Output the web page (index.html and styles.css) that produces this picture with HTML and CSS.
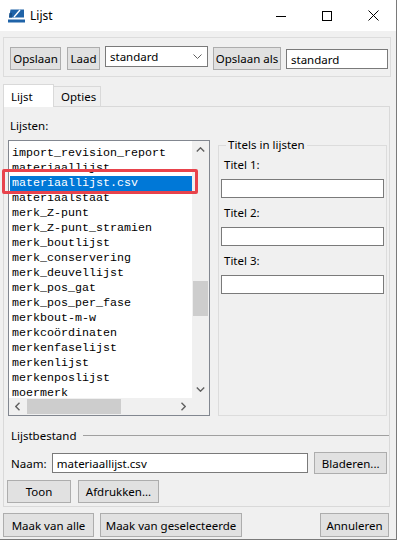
FILE: index.html
```html
<!DOCTYPE html>
<html>
<head>
<meta charset="utf-8">
<title>Lijst</title>
<link rel="stylesheet" href="styles.css">
</head>
<body>
<div class="window">
  <div class="titlebar">
    <svg class="appicon" width="18" height="14" viewBox="0 0 18 14">
      <path d="M2.5 0.5 H16 V8.5 H1 Z" fill="#1f63a8"/>
      <path d="M1.5 4 H4 V8.5 H1 Z" fill="#174f8a"/>
      <path d="M6 8 L12 1" stroke="#ffffff" stroke-width="1.4"/>
      <rect x="0" y="10.5" width="17" height="3" fill="#1f63a8"/>
    </svg>
    <span class="title">Lijst</span>
    <div class="caps">
      <div class="cap"><svg width="10" height="10" viewBox="0 0 10 10"><path d="M0 5.5 H10" stroke="#000" stroke-width="1"/></svg></div>
      <div class="cap"><svg width="10" height="10" viewBox="0 0 10 10"><rect x="0.5" y="0.5" width="9" height="9" fill="none" stroke="#000" stroke-width="1"/></svg></div>
      <div class="cap"><svg width="11" height="11" viewBox="0 0 11 11"><path d="M0.5 0.5 L10.5 10.5 M10.5 0.5 L0.5 10.5" stroke="#000" stroke-width="1"/></svg></div>
    </div>
  </div>

  <div class="client">
    <div class="toolbar">
      <button class="btn w-opslaan">Opslaan</button>
      <button class="btn w-laad">Laad</button>
      <div class="combo">
        <span>standard</span>
        <svg class="chev" width="9" height="5" viewBox="0 0 9 5"><path d="M0.5 0.5 L4.5 4.5 L8.5 0.5" fill="none" stroke="#606060" stroke-width="1"/></svg>
      </div>
      <button class="btn w-opslaanals">Opslaan als</button>
      <div class="textbox tb-standard">standard</div>
    </div>

    <div class="tabs">
      <div class="tab active">Lijst</div>
      <div class="tab">Opties</div>
    </div>

    <div class="tabpage">
      <div class="lbl-lijsten">Lijsten:</div>
      <div class="cols">
        <div class="listbox">
          <div class="list-main">
            <div class="items">
              <div class="item">import_revision_report</div>
              <div class="item">materiaallijst</div>
              <div class="item selected">materiaallijst.csv</div>
              <div class="item">materiaalstaat</div>
              <div class="item">merk_Z-punt</div>
              <div class="item">merk_Z-punt_stramien</div>
              <div class="item">merk_boutlijst</div>
              <div class="item">merk_conservering</div>
              <div class="item">merk_deuvellijst</div>
              <div class="item">merk_pos_gat</div>
              <div class="item">merk_pos_per_fase</div>
              <div class="item">merkbout-m-w</div>
              <div class="item">merkcoördinaten</div>
              <div class="item">merkenfaselijst</div>
              <div class="item">merkenlijst</div>
              <div class="item">merkenposlijst</div>
              <div class="item last">moermerk</div>
            </div>
            <div class="vscroll">
              <div class="sbtn"><svg width="9" height="5" viewBox="0 0 9 5"><path d="M0.8 4.5 L4.5 0.8 L8.2 4.5" fill="none" stroke="#606060" stroke-width="1.4"/></svg></div>
              <div class="vtrack"><div class="vthumb"></div></div>
              <div class="sbtn"><svg width="9" height="5" viewBox="0 0 9 5"><path d="M0.8 0.5 L4.5 4.2 L8.2 0.5" fill="none" stroke="#606060" stroke-width="1.4"/></svg></div>
            </div>
          </div>
          <div class="hscroll">
            <div class="sbtn"><svg width="5" height="9" viewBox="0 0 5 9"><path d="M4.5 0.8 L0.8 4.5 L4.5 8.2" fill="none" stroke="#606060" stroke-width="1.4"/></svg></div>
            <div class="htrack"><div class="hthumb"></div></div>
            <div class="sbtn"><svg width="5" height="9" viewBox="0 0 5 9"><path d="M0.5 0.8 L4.2 4.5 L0.5 8.2" fill="none" stroke="#606060" stroke-width="1.4"/></svg></div>
            <div class="corner"></div>
          </div>
          <div class="callout"></div>
        </div>

        <div class="groupbox">
          <span class="gb-title">Titels in lijsten</span>
          <div class="gb-label first">Titel 1:</div>
          <div class="textbox tb-titel"></div>
          <div class="gb-label">Titel 2:</div>
          <div class="textbox tb-titel"></div>
          <div class="gb-label">Titel 3:</div>
          <div class="textbox tb-titel"></div>
        </div>
      </div>

      <div class="section-head">
        <span>Lijstbestand</span>
        <div class="rule"></div>
      </div>

      <div class="naam-row">
        <span class="naam-lbl">Naam:</span>
        <div class="textbox tb-naam">materiaallijst.csv</div>
        <button class="btn w-bladeren">Bladeren...</button>
      </div>

      <div class="action-row">
        <button class="btn w-toon">Toon</button>
        <button class="btn w-afdrukken">Afdrukken...</button>
      </div>
    </div>

    <div class="bottom-row">
      <button class="btn w-alle">Maak van alle</button>
      <button class="btn w-gesel">Maak van geselecteerde</button>
      <span class="spacer"></span>
      <button class="btn w-annuleren">Annuleren</button>
    </div>
  </div>
</div>
</body>
</html>
```

FILE: styles.css
```css
* { box-sizing: border-box; }
html, body { margin: 0; padding: 0; }
body {
  width: 397px;
  height: 540px;
  overflow: hidden;
  background: #f0f0f0;
  font-family: "Segoe UI", "Noto Sans", sans-serif;
  font-size: 11.5px;
  color: #000;
}
.window {
  width: 397px;
  height: 540px;
  background: #f0f0f0;
  border-right: 1px solid #7a7a7a;
  border-bottom: 1px solid #7a7a7a;
}

/* title bar */
.titlebar {
  height: 31px;
  background: #fff;
  display: flex;
  align-items: center;
}
.appicon { margin-left: 8px; margin-top: 1px; }
.title { margin-left: 4px; font-size: 12px; }
.caps { margin-left: auto; display: flex; align-self: stretch; }
.cap { width: 46px; display: flex; align-items: center; justify-content: center; }

/* client */
.client { padding: 6px 5px 0 3px; }

.btn {
  font: inherit;
  color: #000;
  background: #e1e1e1;
  border: 1px solid #adadad;
  padding: 0;
  margin: 0;
  height: 23px;
  display: flex;
  align-items: center;
  justify-content: center;
}
.textbox {
  background: #fff;
  border: 1px solid #7a7a7a;
  height: 20px;
  padding-left: 4px;
  display: flex;
  align-items: center;
  white-space: nowrap;
}

.toolbar {
  height: 40px;
  border: 1px solid #dcdcdc;
  display: flex;
  align-items: flex-start;
  padding: 9px 0 0 6px;
}
.w-opslaan { width: 51px; }
.w-laad { width: 33px; margin-left: 6px; }
.combo {
  width: 103px;
  height: 21px;
  margin-left: 5px;
  margin-top: -1px;
  background: #fff;
  border: 1px solid #7a7a7a;
  display: flex;
  align-items: center;
  padding: 0 5px 0 4px;
}
.combo span { flex: 1; }
.w-opslaanals { width: 68px; margin-left: 5px; }
.tb-standard { width: 102px; margin-left: 5px; margin-top: 2px; height: 20px; }

/* tabs */
.tabs {
  margin-top: 7px;
  height: 23px;
  margin-bottom: -1px;
  display: flex;
  align-items: flex-end;
}
.tab {
  height: 21px;
  border: 1px solid #d9d9d9;
  background: #f0f0f0;
  padding-left: 7px;
  width: 48px;
  display: flex;
  align-items: center;
}
.tab.active {
  position: relative;
  z-index: 1;
  height: 23px;
  width: 51px;
  background: #fff;
  border-bottom: none;
  padding-left: 7px;
  margin-right: -1px;
}

.tabpage {
  position: relative;
  margin-right: 1px;
  border: 1px solid #d9d9d9;
  padding: 11px 2px 3px 4px;
  height: 401px;
}
.lbl-lijsten { height: 16px; line-height: 16px; padding-left: 2px; }

.cols {
  margin-top: 6px;
  display: grid;
  grid-template-columns: 202px 169px;
  column-gap: 8px;
}

/* listbox */
.listbox {
  position: relative;
  height: 276px;
  border: 1px solid #828790;
  background: #fff;
  display: flex;
  flex-direction: column;
}
.list-main { flex: 1; display: flex; min-height: 0; }
.items {
  flex: 1;
  padding-top: 5px;
  font-family: "Liberation Mono", "DejaVu Sans Mono", monospace;
  font-size: 11.67px;
}
.item {
  height: 15px;
  line-height: 15px;
  margin-left: 1px;
  padding-left: 2px;
  white-space: nowrap;
}
.item.last { height: 12px; line-height: 13px; padding-top: 1px; }
.item.selected { background: #0078d7; color: #fff; }

.vscroll {
  width: 17px;
  background: #f0f0f0;
  display: flex;
  flex-direction: column;
}
.sbtn {
  width: 17px;
  height: 17px;
  display: flex;
  align-items: center;
  justify-content: center;
  flex: none;
}
.vtrack { flex: 1; }
.vthumb { margin: 123px 1px 0 1px; height: 35px; background: #cdcdcd; }

.hscroll {
  position: relative;
  height: 17px;
  background: #f0f0f0;
  display: flex;
}
.htrack { flex: 1; display: flex; }
.hthumb { margin: 1px 0 1px 1px; width: 94px; background: #cdcdcd; }
.corner { width: 17px; background: #f0f0f0; }

.callout {
  position: absolute;
  left: -7px;
  top: 28px;
  width: 196px;
  height: 25px;
  border: 3px solid #e8434c;
  border-radius: 2px;
}

/* groupbox */
.groupbox {
  position: relative;
  margin-top: 5px;
  height: 271px;
  border: 1px solid #dcdcdc;
  padding: 11px 2px 0 2px;
}
.gb-title {
  position: absolute;
  top: -9px;
  left: 7px;
  padding: 0 2px;
  line-height: 16px;
  background: #f0f0f0;
}
.gb-label { height: 16px; line-height: 16px; padding-left: 3px; margin-top: 7px; }
.gb-label.first { margin-top: 0; }
.tb-titel { margin-top: 6px; height: 19px; }

/* Lijstbestand */
.section-head {
  margin-top: 12px;
  height: 16px;
  display: flex;
  align-items: center;
  padding-left: 3px;
  margin-right: -2px;
}
.section-head span { line-height: 16px; }
.rule { flex: 1; height: 1px; background: #a0a0a0; margin-left: 7px; margin-top: -1px; }

.naam-row {
  margin-top: 8px;
  display: flex;
  align-items: center;
  height: 22px;
}
.naam-lbl { width: 44px; padding-left: 3px; }
.tb-naam { width: 258px; height: 20px; }
.w-bladeren { width: 73px; height: 22px; margin-left: 6px; }

.action-row {
  margin-top: 6px;
  display: flex;
  margin-left: -1px;
}
.w-toon { width: 64px; }
.w-afdrukken { width: 81px; margin-left: 7px; }

.bottom-row {
  margin-top: 6px;
  display: flex;
  padding-right: 2px;
}
.bottom-row .btn { height: 24px; }
.w-alle { width: 91px; }
.w-gesel { width: 142px; margin-left: 6px; }
.spacer { flex: 1; }
.w-annuleren { width: 69px; }
```
